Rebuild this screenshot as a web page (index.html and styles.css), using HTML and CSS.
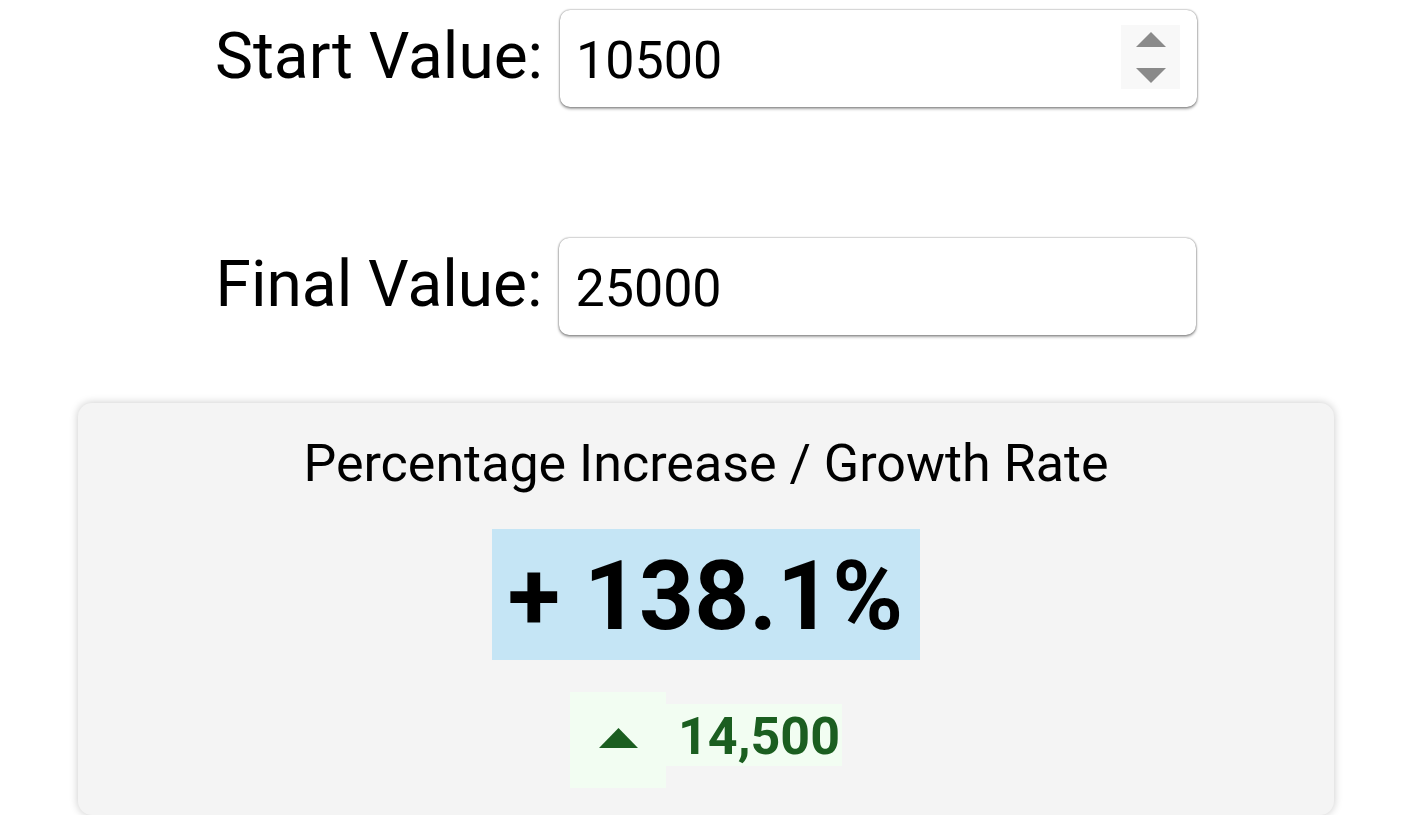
FILE: index.html
```html
<!DOCTYPE html>
<html lang="en">
<head>
<meta charset="utf-8">
<title>Percentage Increase Calculator</title>
<link rel="stylesheet" href="styles.css">
</head>
<body>
<div class="page">
  <div class="row row-start">
    <label class="label" for="start">Start Value:</label>
    <div class="field">
      <input class="input" id="start" type="text" value="10500">
      <div class="spinner">
        <svg class="spin-arrow" width="30" height="15" viewBox="0 0 30 15"><polygon points="15,0 30,15 0,15" fill="#8a8a8a"/></svg>
        <svg class="spin-arrow" width="30" height="15" viewBox="0 0 30 15"><polygon points="0,0 30,0 15,15" fill="#8a8a8a"/></svg>
      </div>
    </div>
  </div>
  <div class="row row-final">
    <label class="label" for="final">Final Value:</label>
    <div class="field">
      <input class="input" id="final" type="text" value="25000">
    </div>
  </div>
  <div class="card">
    <div class="card-title">Percentage Increase / Growth Rate</div>
    <div class="result-wrap">
      <div class="result">+ 138.1%</div>
    </div>
    <div class="diff">
      <div class="diff-arrow">
        <svg width="39" height="20" viewBox="0 0 39 20"><polygon points="19.5,0 39,20 0,20" fill="#1b5e20"/></svg>
      </div>
      <div class="diff-value">14,500</div>
    </div>
  </div>
</div>
</body>
</html>
```
FILE: styles.css
```css
html, body {
  margin: 0;
  padding: 0;
  background: #ffffff;
}
body {
  font-family: Roboto, "Liberation Sans", Arial, sans-serif;
  color: #000;
}
.page {
  width: 1256px;
  margin-left: 78px;
  padding-top: 10px;
}
.row {
  display: flex;
  justify-content: center;
  align-items: center;
  gap: 17px;
}
.row-final {
  margin-top: 131px;
}
.label {
  font-size: 64px;
  line-height: 75px;
  margin-top: -4px;
}
.field {
  position: relative;
  width: 637px;
  height: 97px;
}
.input {
  box-sizing: border-box;
  width: 100%;
  height: 100%;
  margin: 0;
  border: none;
  border-radius: 10px;
  background: #fff;
  box-shadow: 0 0 2px rgba(0, 0, 0, 0.55), 0 2px 3px rgba(0, 0, 0, 0.35);
  padding: 4px 0 0 16px;
  font-family: Roboto, "Liberation Sans", Arial, sans-serif;
  font-size: 52px;
  color: #000;
  outline: none;
}
.spinner {
  position: absolute;
  right: 17px;
  top: 15px;
  width: 59px;
  height: 64px;
  background: #f8f8f8;
  display: flex;
  flex-direction: column;
  align-items: center;
  justify-content: space-between;
  padding: 7px 0 6px;
  box-sizing: border-box;
}
.spin-arrow {
  display: block;
}
.card {
  margin-top: 68px;
  background: #f4f4f4;
  border-radius: 14px;
  box-shadow: 0 0 8px rgba(0, 0, 0, 0.22);
  padding: 30px 0 27px;
  text-align: center;
}
.card-title {
  font-size: 52px;
  line-height: 61px;
}
.result-wrap {
  margin-top: 35px;
  display: flex;
  justify-content: center;
}
.result {
  background: #c5e5f5;
  font-size: 96px;
  font-weight: 700;
  line-height: 115px;
  padding: 10px 17px 6px 16px;
}
.diff {
  margin-top: 32px;
  display: flex;
  justify-content: center;
  align-items: flex-start;
}
.diff-arrow {
  width: 96px;
  height: 96px;
  background: #f2fdf2;
  display: flex;
  align-items: center;
  justify-content: center;
}
.diff-arrow svg {
  display: block;
  margin-top: -4px;
}
.diff-value {
  margin-top: 12px;
  background: #f2fdf2;
  color: #1b5e20;
  font-size: 52px;
  font-weight: 700;
  line-height: 58px;
  padding: 4px 2px 0 12px;
}
```
